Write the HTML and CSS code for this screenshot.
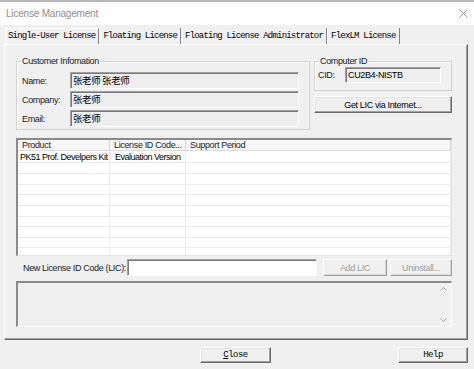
FILE: index.html
```html
<!DOCTYPE html>
<html lang="en">
<head>
    <meta charset="UTF-8">
    <meta name="viewport" content="width=device-width, initial-scale=1.0">
    <title>License Management</title>
    <link rel="stylesheet" href="styles.css">
</head>
<body>
    <div class="window">
        <div class="titlebar">
            <span class="title">License Management</span>
            <svg class="close-x" width="9" height="9" viewBox="0 0 9 9">
                <path d="M0.5 0.5L8.5 8.5M8.5 0.5L0.5 8.5" stroke="#9a9a9a" stroke-width="1" fill="none"/>
            </svg>
        </div>

        <div class="tabs">
            <div class="tab active">Single-User License</div>
            <div class="tab">Floating License</div>
            <div class="tab">Floating License Administrator</div>
            <div class="tab">FlexLM License</div>
        </div>

        <div class="panel">
            <div class="top-row">
                <div class="group customer">
                    <span class="legend">Customer Infomation</span>
                    <div class="field-row">
                        <label>Name:</label>
                        <div class="field cjk">张老师 张老师</div>
                    </div>
                    <div class="field-row">
                        <label>Company:</label>
                        <div class="field cjk">张老师</div>
                    </div>
                    <div class="field-row">
                        <label>Email:</label>
                        <div class="field cjk">张老师</div>
                    </div>
                </div>
                <div class="side">
                    <div class="group computer">
                        <span class="legend">Computer ID</span>
                        <div class="field-row">
                            <label>CID:</label>
                            <div class="field">CU2B4-NISTB</div>
                        </div>
                    </div>
                    <button class="btn get-lic">Get LIC via Internet...</button>
                </div>
            </div>

            <div class="list">
                <div class="list-head">
                    <span>Product</span>
                    <span>License ID Code...</span>
                    <span>Support Period</span>
                </div>
                <div class="list-row first">
                    <span>PK51 Prof. Develpers Kit</span>
                    <span>Evaluation Version</span>
                    <span></span>
                </div>
                <div class="list-row"><span></span><span></span><span></span></div>
                <div class="list-row"><span></span><span></span><span></span></div>
                <div class="list-row"><span></span><span></span><span></span></div>
                <div class="list-row"><span></span><span></span><span></span></div>
                <div class="list-row"><span></span><span></span><span></span></div>
                <div class="list-row"><span></span><span></span><span></span></div>
                <div class="list-row"><span></span><span></span><span></span></div>
                <div class="list-row"><span></span><span></span><span></span></div>
                <div class="list-row"><span></span><span></span><span></span></div>
            </div>

            <div class="lic-row">
                <label class="lic-label">New License ID Code (LIC):</label>
                <input class="lic-input" type="text">
                <button class="btn add-lic" disabled>Add LIC</button>
                <button class="btn uninstall" disabled>Uninstall...</button>
            </div>

            <div class="log">
                <div class="log-text"></div>
                <div class="scrollbar">
                    <svg width="7" height="5" viewBox="0 0 7 5"><path d="M0.5 4.5L3.5 1.5L6.5 4.5" stroke="#a6a6a6" fill="none"/></svg>
                    <svg width="7" height="5" viewBox="0 0 7 5"><path d="M0.5 0.5L3.5 3.5L6.5 0.5" stroke="#a6a6a6" fill="none"/></svg>
                </div>
            </div>
        </div>

        <div class="footer">
            <button class="btn mono close"><u>C</u>lose</button>
            <button class="btn mono help">Help</button>
        </div>
    </div>
</body>
</html>
```

FILE: styles.css
```css
* {
    box-sizing: border-box;
}
body {
    margin: 0;
    background-color: #f0f0f0;
    font-family: "Liberation Sans", Arial, sans-serif;
    font-size: 9px;
    letter-spacing: -0.35px;
    color: #000;
}
.window {
    width: 474px;
    height: 369px;
    overflow: hidden;
}
.titlebar {
    height: 25px;
    border-top: 2px solid #b9b9b9;
    background-color: #fff;
    display: flex;
    align-items: center;
    justify-content: space-between;
    padding: 0 6px;
}
.title {
    font-size: 10px;
    letter-spacing: -0.2px;
    color: #8f8f8f;
}

/* tabs */
.tabs {
    display: flex;
    margin-top: 3px;
    padding-left: 5px;
    height: 16px;
    font-family: "Liberation Mono", "Courier New", monospace;
    font-size: 9px;
    letter-spacing: -0.8px;
}
.tab {
    line-height: 16px;
    padding: 0 3px 0 3px;
    border-right: 1px solid #808080;
    border-left: 1px solid #fff;
}
.tab.active {
    border-top: 1px solid #fff;
    padding-left: 2px;
    line-height: 15px;
}

/* tab page */
.panel {
    margin-left: 4px;
    width: 464px;
    height: 296px;
    border-top: 1px solid #fff;
    border-left: 1px solid #fff;
    border-right: 1px solid #696969;
    border-bottom: 1px solid #696969;
    box-shadow: inset -1px -1px #a0a0a0;
    padding: 16px 15px 0 11px;
}
.top-row {
    display: flex;
    gap: 4px;
}
.group {
    position: relative;
    border: 1px solid #d3d3d3;
    box-shadow: inset 1px 1px #fff;
}
.legend {
    position: absolute;
    top: -6px;
    left: 4px;
    padding: 0 1px;
    line-height: 11px;
    background-color: #f0f0f0;
    color: #222;
}
.customer {
    width: 294px;
    height: 69px;
    padding: 10px 10px 0 5px;
    display: flex;
    flex-direction: column;
    gap: 2px;
}
.field-row {
    display: grid;
    grid-template-columns: 48px 1fr;
    align-items: center;
    height: 17px;
}
.field-row label {
    color: #222;
}
.field {
    height: 17px;
    border: 1px solid;
    border-color: #a0a0a0 #fff #fff #a0a0a0;
    box-shadow: inset 1px 1px #7a7a7a;
    background-color: #eeeeee;
    padding: 0 0 0 2px;
    line-height: 15px;
    white-space: nowrap;
}
.cjk {
    font-family: "Noto Sans CJK SC", sans-serif;
    font-size: 9.5px;
    letter-spacing: -0.4px;
}
.side {
    width: 138px;
}
.computer {
    height: 30px;
    padding: 5px 10px 0 3px;
}
.computer .field-row {
    grid-template-columns: 27px 1fr;
    height: 16px;
}
.computer .field {
    height: 16px;
    line-height: 14px;
}

/* buttons */
.btn {
    font-family: inherit;
    font-size: inherit;
    letter-spacing: inherit;
    color: #000;
    background-color: #f0f0f0;
    border: 1px solid;
    border-color: #fff #696969 #696969 #fff;
    box-shadow: inset -1px -1px #a0a0a0, inset 1px 1px #e3e3e3;
    padding: 0;
    height: 17px;
}
.btn:disabled {
    color: #a0a0a0;
    border-color: #fff #a0a0a0 #a0a0a0 #fff;
    box-shadow: inset -1px -1px #d8d8d8;
}
.get-lic {
    display: block;
    width: 100%;
    margin-top: 5px;
}

/* product list */
.list {
    margin-top: 8px;
    height: 118px;
    overflow: hidden;
    background-color: #fff;
    border-top: 2px solid #8a8a8a;
    border-left: 2px solid #8a8a8a;
    border-right: 1px solid #e3e3e3;
    border-bottom: 1px solid #e3e3e3;
}
.list-head,
.list-row {
    display: grid;
    grid-template-columns: 92px 76px 1fr;
}
.list-head {
    height: 11px;
    line-height: 10px;
    background-color: #f7f7f7;
    border-bottom: 1px solid #dcdcdc;
}
.list-head span {
    padding-left: 4px;
    border-right: 1px solid #d5d5d5;
    color: #222;
}
.list-row {
    height: 10.65px;
    line-height: 10px;
    border-bottom: 1px solid #ececec;
}
.list-row.first {
    height: 12.3px;
    line-height: 12px;
}
.list-row span {
    padding-left: 2px;
    border-right: 1px solid #ececec;
    letter-spacing: -0.5px;
    white-space: nowrap;
}
.list-row span + span {
    padding-left: 5px;
}

/* new license row */
.lic-row {
    display: flex;
    align-items: center;
    margin-top: 3px;
    height: 17px;
}
.lic-label {
    width: 111px;
    padding-left: 7px;
    color: #222;
}
.lic-input {
    width: 190px;
    height: 17px;
    margin: 0;
    border: 1px solid;
    border-color: #a0a0a0 #fff #fff #a0a0a0;
    box-shadow: inset 1px 1px #7a7a7a;
    background-color: #fff;
    outline: none;
}
.add-lic {
    width: 64px;
    margin-left: 6px;
}
.uninstall {
    width: 62px;
    margin-left: 3px;
}

/* message area */
.log {
    display: flex;
    margin-top: 5px;
    height: 46px;
    border-top: 2px solid #8a8a8a;
    border-left: 2px solid #8a8a8a;
    border-right: 1px solid #fff;
    border-bottom: 1px solid #fff;
}
.log-text {
    flex: 1;
}
.scrollbar {
    width: 16px;
    display: flex;
    flex-direction: column;
    justify-content: space-between;
    align-items: center;
    padding: 3px 0 3px;
}

/* dialog buttons */
.footer {
    display: flex;
    padding: 7px 6px 0 200px;
}
.mono {
    font-family: "Liberation Mono", "Courier New", monospace;
    font-size: 9px;
    letter-spacing: -0.5px;
    height: 16px;
}
.close {
    width: 71px;
}
.help {
    width: 70px;
    margin-left: auto;
}
```
